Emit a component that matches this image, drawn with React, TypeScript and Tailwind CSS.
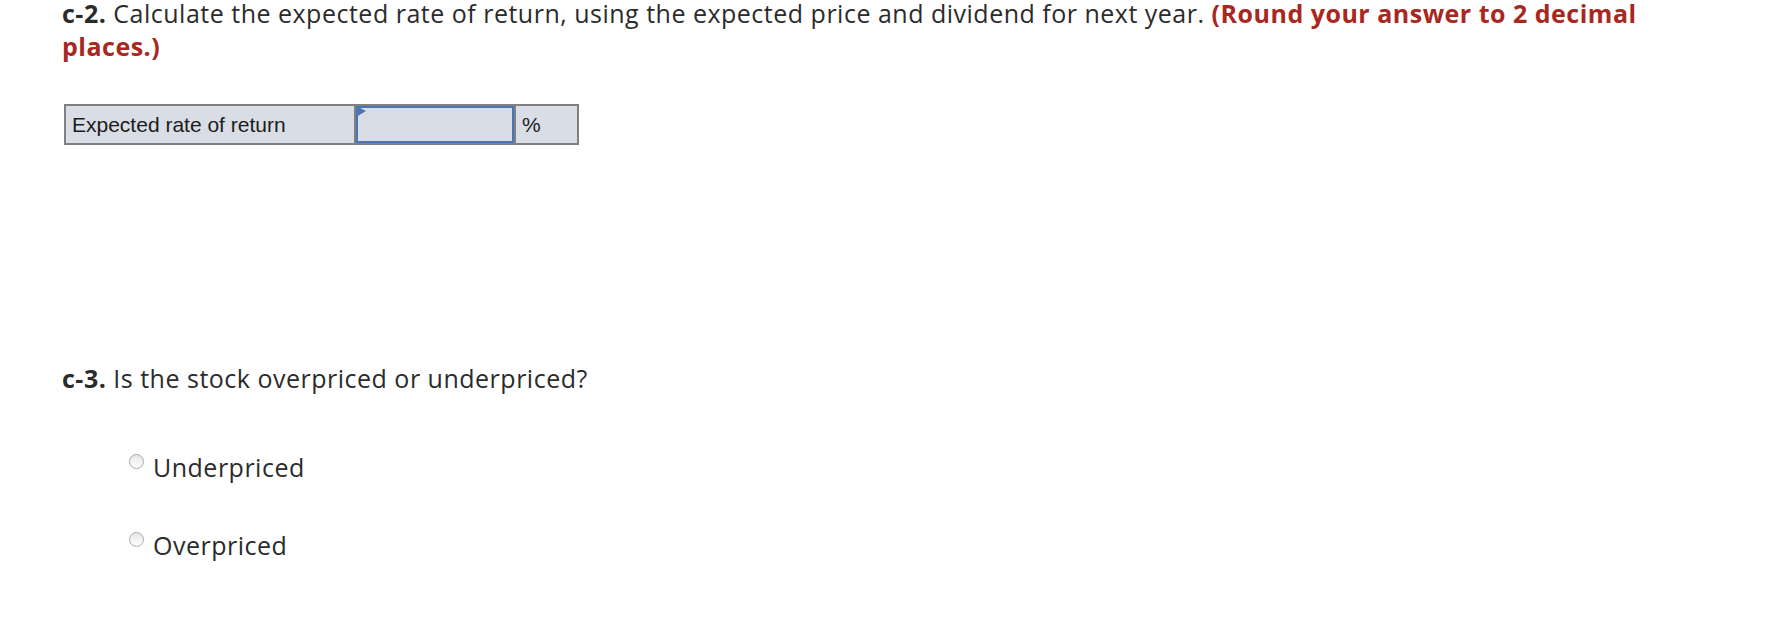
export default function App() {
  return (
    <div className="w-[1766px] h-[624px] bg-white flex flex-col pl-[62px] text-[#2b2b2b] font-['Open_Sans','Noto_Sans',sans-serif] tracking-[0.5px]">
      <p className="text-[25px] leading-[27px]">
        <span className="block whitespace-nowrap">
          <b>c-2.</b> Calculate the expected rate of return, using the expected price and dividend for next year.{' '}
          <b className="text-[#a8281f]">(Round your answer to 2 decimal</b>
        </span>
        <b className="block mt-[6px] text-[#a8281f]">places.)</b>
      </p>

      {/* answer table */}
      <div className="ml-[2px] mt-[44px] flex w-[515px] h-[41px] border-2 border-[#808080] bg-[#d9dde5] font-['Liberation_Sans',Arial,sans-serif] text-[21px] tracking-normal text-[#1c1c1c]">
        <div className="w-[290px] flex items-center pl-[6px] border-r-2 border-[#808080]">
          Expected rate of return
        </div>
        <div className="w-[160px] border-r-2 border-[#808080]">
          <div className="relative h-full border-2 border-[#4a76b8]">
            <svg className="absolute -left-[2px] -top-[2px]" width="11" height="12" viewBox="0 0 11 12">
              <polygon points="0,0 10,5 0,11" fill="#4a76b8" />
            </svg>
          </div>
        </div>
        <div className="flex-1 flex items-center pl-[6px]">%</div>
      </div>

      <p className="mt-[216px] text-[25px] leading-[35px]">
        <b>c-3.</b> Is the stock overpriced or underpriced?
      </p>

      <label className="mt-[56px] flex items-start pl-[67px] text-[25px] leading-[30px]">
        <span className="mt-[2px] w-[15px] h-[15px] rounded-full border border-[#a9a9a9] bg-linear-to-b from-[#e6e6e6] to-white" />
        <span className="ml-[9px]">Underpriced</span>
      </label>

      <label className="mt-[48px] flex items-start pl-[67px] text-[25px] leading-[30px]">
        <span className="mt-[2px] w-[15px] h-[15px] rounded-full border border-[#a9a9a9] bg-linear-to-b from-[#e6e6e6] to-white" />
        <span className="ml-[9px]">Overpriced</span>
      </label>
    </div>
  )
}
